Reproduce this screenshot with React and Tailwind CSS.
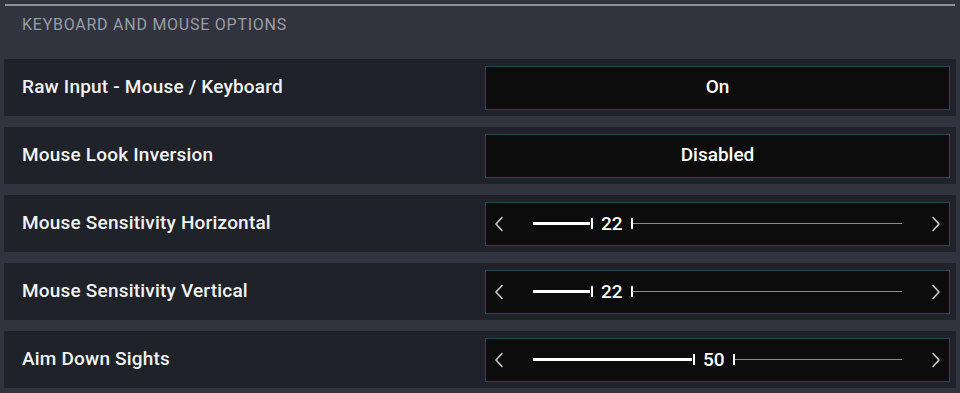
import React from 'react';

const rows = [
  { label: 'Raw Input - Mouse / Keyboard', type: 'toggle', value: 'On' },
  { label: 'Mouse Look Inversion', type: 'toggle', value: 'Disabled' },
  { label: 'Mouse Sensitivity Horizontal', type: 'slider', value: 22, fill: 57 },
  { label: 'Mouse Sensitivity Vertical', type: 'slider', value: 22, fill: 57 },
  { label: 'Aim Down Sights', type: 'slider', value: 50, fill: 159 },
];

const Chevron = ({ dir }) => (
  <svg width="10" height="16" viewBox="0 0 10 16" fill="none">
    <polyline
      points={dir === 'left' ? '8,1.5 2,8 8,14.5' : '2,1.5 8,8 2,14.5'}
      stroke="#c9cacd"
      strokeWidth="1.6"
      strokeLinecap="round"
      strokeLinejoin="round"
    />
  </svg>
);

const Slider = ({ value, fill }) => (
  <div className="flex items-center h-full px-[8px]">
    <Chevron dir="left" />
    <div className="flex-1 flex items-center mx-[29px]">
      <div className="h-[3px] bg-white" style={{ width: fill }} />
      <div className="w-[2px] h-[11px] bg-white ml-[1px]" />
      <span className="px-[8px] text-[19px] font-medium text-white leading-none">{value}</span>
      <div className="w-[2px] h-[11px] bg-white" />
      <div className="flex-1 h-px bg-[#8b8b8e]" />
    </div>
    <Chevron dir="right" />
  </div>
);

const App = () => {
  return (
    <div
      className="w-[960px] h-[393px] bg-[#31343f] overflow-hidden px-[4px]"
      style={{ fontFamily: 'Roboto, "Liberation Sans", sans-serif' }}
    >
      <div className="mt-[4px] mx-[1px] h-[2px] bg-[#8f929b]" />
      <div className="h-[53px] pl-[18px] pt-[10px] text-[16px] leading-[18px] tracking-[0.75px] text-[#9a9da5] uppercase">
        Keyboard and Mouse Options
      </div>
      <div className="flex flex-col gap-[11px]">
        {rows.map((row) => (
          <div
            key={row.label}
            className="h-[57px] bg-[#1f2229] flex items-center justify-between pl-[18px] pr-[6px]"
          >
            <span className="text-[19px] tracking-[0.2px] font-medium text-[#f2f2f2]">{row.label}</span>
            <div className="w-[465px] h-[44px] border border-[#2d4656] bg-[#0c0c0d]">
              {row.type === 'toggle' ? (
                <div className="h-full flex items-center justify-center text-[19px] font-medium text-white">
                  {row.value}
                </div>
              ) : (
                <Slider value={row.value} fill={row.fill} />
              )}
            </div>
          </div>
        ))}
      </div>
    </div>
  );
};

export default App;
